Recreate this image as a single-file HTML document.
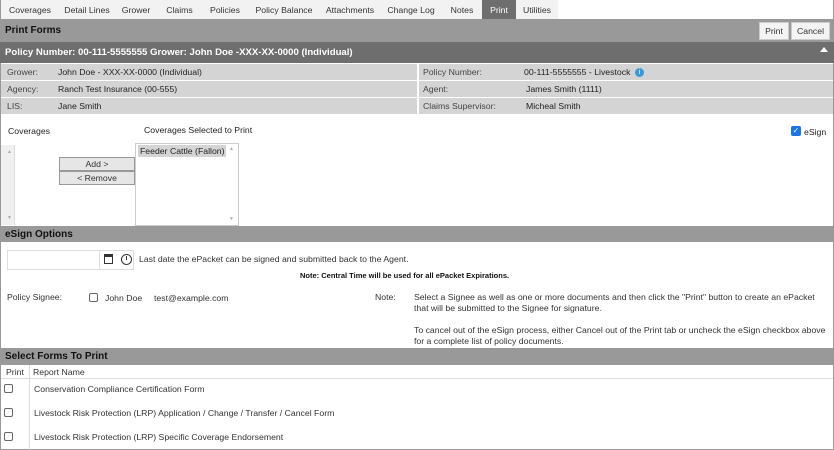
<!DOCTYPE html>
<html><head><style>
*{box-sizing:border-box;margin:0;padding:0}
body{width:834px;height:450px;overflow:hidden;background:#fff;font-family:"Liberation Sans",Arial,sans-serif;font-size:8.7px;color:#222;position:relative}
.a{position:absolute;white-space:nowrap}
.tab{position:absolute;top:0;height:19px;line-height:20px;text-align:center;background:#f2f2f2;color:#333;font-size:8.7px}
.bar{position:absolute;left:0;width:834px;background:#999;color:#111;font-weight:bold;font-size:10px;padding-left:5px}
.row{position:absolute;height:16px;background:#d4d4d4;line-height:16px;font-size:8.7px}
.cb{position:absolute;width:9px;height:9px;border:1px solid #666;border-radius:2px;background:#fff}
.btn{position:absolute;background:#f4f4f4;border:1px solid #ccc;font-size:8.7px;text-align:center;color:#333}
</style></head><body>
<div class="a" style="left:0;top:0;width:834px;height:450px;border:1px solid #999;border-top:none"></div>
<div class="tab" style="left:1px;width:58px">Coverages</div>
<div class="tab" style="left:59px;width:56px">Detail Lines</div>
<div class="tab" style="left:115px;width:42px">Grower</div>
<div class="tab" style="left:157px;width:45px">Claims</div>
<div class="tab" style="left:202px;width:46px">Policies</div>
<div class="tab" style="left:248px;width:72px">Policy Balance</div>
<div class="tab" style="left:320px;width:60px">Attachments</div>
<div class="tab" style="left:380px;width:62px">Change Log</div>
<div class="tab" style="left:442px;width:40px">Notes</div>
<div class="tab" style="left:482px;width:34px;background:#6e6e6e;color:#fff">Print</div>
<div class="tab" style="left:516px;width:42px">Utilities</div>

<div class="bar" style="top:19px;height:23px;line-height:24px">Print Forms</div>
<div class="btn" style="left:759px;top:22px;width:30px;height:18px;line-height:16px">Print</div>
<div class="btn" style="left:791px;top:22px;width:39px;height:18px;line-height:16px">Cancel</div>
<div class="bar" style="top:42px;height:21px;line-height:21px;background:#6e6e6e;color:#fff;font-size:9.6px">Policy Number: 00-111-5555555 Grower: John Doe -XXX-XX-0000 (Individual)</div>
<div class="a" style="left:820px;top:47px;width:0;height:0;border-left:4px solid transparent;border-right:4px solid transparent;border-bottom:5px solid #fff"></div>

<div class="row" style="left:1px;top:64px;width:416px"><span class="a" style="left:6px;color:#444">Grower:</span><span class="a" style="left:57px">John Doe - XXX-XX-0000 (Individual)</span></div>
<div class="row" style="left:1px;top:81px;width:416px"><span class="a" style="left:6px;color:#444">Agency:</span><span class="a" style="left:57px">Ranch Test Insurance (00-555)</span></div>
<div class="row" style="left:1px;top:98px;width:416px"><span class="a" style="left:6px;color:#444">LIS:</span><span class="a" style="left:57px">Jane Smith</span></div>
<div class="row" style="left:419px;top:64px;width:414px"><span class="a" style="left:4px;color:#444">Policy Number:</span><span class="a" style="left:105px">00-111-5555555 - Livestock</span><span class="a" style="left:216px;top:4px;width:9px;height:9px;border-radius:50%;background:#3a9ad9;color:#fff;font-size:7px;line-height:9px;text-align:center">i</span></div>
<div class="row" style="left:419px;top:81px;width:414px"><span class="a" style="left:4px;color:#444">Agent:</span><span class="a" style="left:107px">James Smith (1111)</span></div>
<div class="row" style="left:419px;top:98px;width:414px"><span class="a" style="left:4px;color:#444">Claims Supervisor:</span><span class="a" style="left:107px">Micheal Smith</span></div>

<div class="a" style="left:8px;top:126px">Coverages</div>
<div class="a" style="left:144px;top:125px">Coverages Selected to Print</div>
<div class="a" style="left:791px;top:126px;width:10px;height:10px;background:#1a73e8;border-radius:2px;color:#fff;font-size:8px;line-height:10px;text-align:center">✓</div>
<div class="a" style="left:804px;top:127px">eSign</div>
<div class="a" style="left:1px;top:145px;width:14px;height:80px;background:#f0f0f0;border-right:1px solid #ddd"></div>
<div class="a" style="left:7px;top:149px;font-size:5px;color:#aaa">▲</div>
<div class="a" style="left:7px;top:215px;font-size:5px;color:#aaa">▼</div>
<div class="btn" style="left:59px;top:157px;width:76px;height:14px;line-height:12px;background:#e6e6e6;border-color:#999">Add &gt;</div>
<div class="btn" style="left:59px;top:171px;width:76px;height:14px;line-height:12px;background:#e6e6e6;border-color:#999">&lt; Remove</div>
<div class="a" style="left:135px;top:143px;width:104px;height:83px;border:1px solid #ccc;background:#fff"></div>
<div class="a" style="left:138px;top:145px;width:88px;height:12px;background:#d4d4d4;line-height:12px;font-size:8.7px;padding-left:2px">Feeder Cattle (Fallon)</div>
<div class="a" style="left:229px;top:146px;font-size:5px;color:#aaa">▲</div>
<div class="a" style="left:229px;top:216px;font-size:5px;color:#aaa">▼</div>

<div class="bar" style="top:226px;height:16px;line-height:17px">eSign Options</div>
<div class="a" style="left:7px;top:250px;width:127px;height:20px;border:1px solid #ddd"></div>
<div class="a" style="left:99px;top:250px;width:1px;height:20px;background:#ddd"></div>
<div class="a" style="left:104px;top:254px;width:9px;height:10px;border:1.5px solid #333;border-top-width:3px"></div>
<div class="a" style="left:121px;top:254px;width:11px;height:11px;border:1px solid #333;border-radius:50%"></div>
<div class="a" style="left:126px;top:256px;width:1px;height:4px;background:#333"></div>
<div class="a" style="left:139px;top:254px;color:#333">Last date the ePacket can be signed and submitted back to the Agent.</div>
<div class="a" style="left:300px;top:271px;font-size:7.5px;font-weight:bold;color:#111">Note: Central Time will be used for all ePacket Expirations.</div>
<div class="a" style="left:7px;top:292px;color:#333">Policy Signee:</div>
<div class="cb" style="left:89px;top:293px"></div>
<div class="a" style="left:105px;top:293px;color:#333">John Doe</div>
<div class="a" style="left:154px;top:293px;color:#333">test@example.com</div>
<div class="a" style="left:375px;top:292px;color:#333">Note:</div>
<div class="a" style="left:414px;top:292px;color:#333;line-height:11px">Select a Signee as well as one or more documents and then click the "Print" button to create an ePacket<br>that will be submitted to the Signee for signature.<br><br>To cancel out of the eSign process, either Cancel out of the Print tab or uncheck the eSign checkbox above<br>for a complete list of policy documents.</div>

<div class="bar" style="top:348px;height:17px;line-height:17px">Select Forms To Print</div>
<div class="a" style="left:6px;top:367px;color:#333">Print</div>
<div class="a" style="left:29px;top:365px;width:1px;height:85px;background:#ddd"></div>
<div class="a" style="left:33px;top:367px;color:#333">Report Name</div>
<div class="a" style="left:1px;top:378px;width:832px;height:1px;background:#ddd"></div>
<div class="cb" style="left:4px;top:384px"></div>
<div class="a" style="left:34px;top:384px;color:#333">Conservation Compliance Certification Form</div>
<div class="cb" style="left:4px;top:408px"></div>
<div class="a" style="left:34px;top:408px;color:#333">Livestock Risk Protection (LRP) Application / Change / Transfer / Cancel Form</div>
<div class="cb" style="left:4px;top:432px"></div>
<div class="a" style="left:34px;top:432px;color:#333">Livestock Risk Protection (LRP) Specific Coverage Endorsement</div>
</body></html>
